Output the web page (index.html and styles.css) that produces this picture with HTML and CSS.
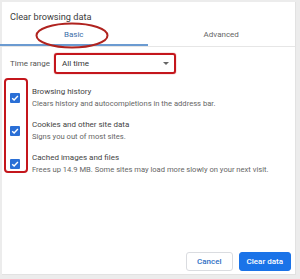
FILE: index.html
```html
<!DOCTYPE html>
<html lang="en">
<head>
    <meta charset="UTF-8">
    <title>Clear browsing data</title>
    <link rel="stylesheet" href="styles.css">
</head>
<body>
    <div class="dialog">
        <div class="title">Clear browsing data</div>

        <div class="tabs">
            <div class="tab active">
                Basic
                <!-- annotation -->
                <svg class="ring" width="74" height="27" viewBox="0 0 74 27">
                    <ellipse cx="37" cy="13.5" rx="35.5" ry="12" fill="none" stroke="#b0231f" stroke-width="2"/>
                </svg>
            </div>
            <div class="tab">Advanced</div>
        </div>

        <div class="range">
            <span class="range-label">Time range</span>
            <div class="select">
                <span>All time</span>
                <span class="caret"></span>
            </div>
        </div>

        <div class="items">
            <div class="mark"></div>
            <div class="item">
                <span class="check"><svg width="10" height="10" viewBox="0 0 10 10"><path d="M2.2 5.2 L4.1 7 L7.9 3" fill="none" stroke="#fff" stroke-width="1.4"/></svg></span>
                <div>
                    <div class="item-name">Browsing history</div>
                    <div class="item-desc">Clears history and autocompletions in the address bar.</div>
                </div>
            </div>
            <div class="item">
                <span class="check"><svg width="10" height="10" viewBox="0 0 10 10"><path d="M2.2 5.2 L4.1 7 L7.9 3" fill="none" stroke="#fff" stroke-width="1.4"/></svg></span>
                <div>
                    <div class="item-name">Cookies and other site data</div>
                    <div class="item-desc">Signs you out of most sites.</div>
                </div>
            </div>
            <div class="item">
                <span class="check"><svg width="10" height="10" viewBox="0 0 10 10"><path d="M2.2 5.2 L4.1 7 L7.9 3" fill="none" stroke="#fff" stroke-width="1.4"/></svg></span>
                <div>
                    <div class="item-name">Cached images and files</div>
                    <div class="item-desc">Frees up 14.9 MB. Some sites may load more slowly on your next visit.</div>
                </div>
            </div>
        </div>

        <div class="actions">
            <button class="btn">Cancel</button>
            <button class="btn primary">Clear data</button>
        </div>
    </div>
</body>
</html>
```

FILE: styles.css
```css
html, body {
    margin: 0;
    padding: 0;
}
body {
    width: 300px;
    height: 279px;
    background: #ececec;
    font-family: Roboto, "Liberation Sans", sans-serif;
    color: #333;
    overflow: hidden;
}
.dialog {
    background: white;
    margin: 2px 4px 0 2px;
    height: 273px;
    box-sizing: border-box;
    display: flex;
    flex-direction: column;
    border-right: 1px solid #e2e2e2;
    border-bottom: 1px solid #e2e2e2;
}
.title {
    font-size: 9.2px;
    padding: 9px 0 0 8px;
    height: 17px;
    color: #3c3c3c;
}
.tabs {
    display: flex;
    border-bottom: 1px solid #e6e6e6;
    margin-left: -2px;
}
.tab {
    flex: 1;
    text-align: center;
    font-size: 8px;
    color: #666;
    height: 18px;
    line-height: 14px;
    position: relative;
}
.tab.active {
    color: #3a6ea8;
    border-bottom: 2px solid #6b9bd1;
    height: 16px;
}
.ring {
    position: absolute;
    left: 35px;
    top: -6px;
}
.range {
    display: flex;
    align-items: center;
    gap: 4px;
    padding: 6px 0 0 8px;
}
.range-label {
    font-size: 8px;
    color: #555;
}
.select {
    width: 107px;
    height: 17px;
    border: 2px solid #c4161c;
    border-radius: 3px;
    box-shadow: 0 0 1px #c4161c;
    display: flex;
    align-items: center;
    justify-content: space-between;
    padding: 0 5px 0 6px;
    font-size: 8px;
    color: #333;
}
.caret {
    width: 0;
    height: 0;
    border-left: 3px solid transparent;
    border-right: 3px solid transparent;
    border-top: 3px solid #666;
}
.items {
    position: relative;
    padding: 12px 0 0 8px;
    display: flex;
    flex-direction: column;
    gap: 9px;
}
.mark {
    position: absolute;
    left: 2px;
    top: 4px;
    width: 20px;
    height: 91px;
    border: 2px solid #c4161c;
    border-radius: 4px;
}
.item {
    display: flex;
    gap: 12px;
    align-items: center;
}
.check {
    width: 10px;
    height: 10px;
    background: #2a6fd6;
    border-radius: 1px;
    display: flex;
    flex: none;
}
.item-name {
    font-size: 8px;
    color: #444;
    line-height: 12px;
}
.item-desc {
    font-size: 7.6px;
    color: #666;
    line-height: 12px;
}
.actions {
    margin-top: auto;
    display: flex;
    justify-content: flex-end;
    gap: 6px;
    padding: 0 4px 3px 0;
}
.btn {
    font-family: Roboto, "Liberation Sans", sans-serif;
    font-size: 8px;
    height: 19px;
    padding: 0 10px;
    border-radius: 3px;
    border: 1px solid #dadce0;
    background: white;
    color: #2f6fc4;
    font-weight: 500;
}
.btn.primary {
    background: #1a73e8;
    border-color: #1a73e8;
    color: white;
    padding: 0 7px;
}
```
